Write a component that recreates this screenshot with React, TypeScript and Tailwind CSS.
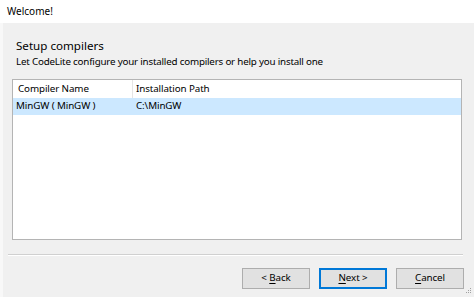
import React from "react";

const font = { fontFamily: '"Noto Sans", "Open Sans", sans-serif' };

const WizardButton = ({
  mnemonic,
  rest,
  before = "",
  primary = false,
}: {
  mnemonic: string;
  rest: string;
  before?: string;
  primary?: boolean;
}) => (
  <button
    className={
      "w-[68px] h-[21px] flex items-center justify-center text-[9.8px] tracking-[-0.1px] text-black bg-[#e1e1e1] " +
      (primary ? "border-2 border-[#0078d7]" : "border border-[#adadad]")
    }
  >
    <span>
      {before}
      <span className="underline underline-offset-2">{mnemonic}</span>
      {rest}
    </span>
  </button>
);

const App = () => {
  return (
    <div className="w-[474px] h-[297px] bg-white flex flex-col overflow-hidden text-black" style={font}>
      <div className="h-[23px] flex items-center pl-[7px] text-[10px]">Welcome!</div>
      <div className="flex-1 flex">
        <div className="w-[3px] bg-[#f8f8f8]"></div>
        <div className="flex-1 bg-[#f0f0f0] flex flex-col relative">
          <div className="pl-[13px] pt-[14px]">
            <div className="text-[11.6px] leading-[17px]">Setup compilers</div>
            <div className="text-[9.8px] tracking-[-0.2px] leading-[13px] mt-[1px]">
              Let CodeLite configure your installed compilers or help you install one
            </div>
          </div>
          <div className="ml-[9px] mt-[11px] w-[450px] h-[161px] bg-white border border-[#b4b4b4] flex flex-col text-[9.8px] tracking-[-0.1px]">
            <div className="h-[18px] flex items-center">
              <div className="w-[120px] h-full flex items-center pl-[5px] border-r border-[#e5e5e5]">Compiler Name</div>
              <div className="flex-1 pl-[3px]">Installation Path</div>
            </div>
            <div className="h-[17px] flex items-center bg-[#cce8ff]">
              <div className="w-[120px] pl-[3px]">MinGW ( MinGW )</div>
              <div className="flex-1 pl-[3px]">C:\MinGW</div>
            </div>
          </div>
          <div className="ml-[5px] mt-[14px] w-[455px] border-t border-[#d0d0d0] border-b border-b-white"></div>
          <div className="flex justify-end gap-[9px] mr-[10px] mt-[12px]">
            <WizardButton before="< " mnemonic="B" rest="ack" />
            <WizardButton mnemonic="N" rest="ext >" primary />
            <WizardButton mnemonic="C" rest="ancel" />
          </div>
          <div className="absolute right-[3px] bottom-[4px] grid grid-cols-3 gap-[1px]">
            <div className="w-[1px] h-[1px]"></div>
            <div className="w-[1px] h-[1px]"></div>
            <div className="w-[1px] h-[1px] bg-[#a0a0a0]"></div>
            <div className="w-[1px] h-[1px]"></div>
            <div className="w-[1px] h-[1px] bg-[#a0a0a0]"></div>
            <div className="w-[1px] h-[1px] bg-[#a0a0a0]"></div>
            <div className="w-[1px] h-[1px] bg-[#a0a0a0]"></div>
            <div className="w-[1px] h-[1px] bg-[#a0a0a0]"></div>
            <div className="w-[1px] h-[1px] bg-[#a0a0a0]"></div>
          </div>
        </div>
      </div>
    </div>
  );
};

export default App;
